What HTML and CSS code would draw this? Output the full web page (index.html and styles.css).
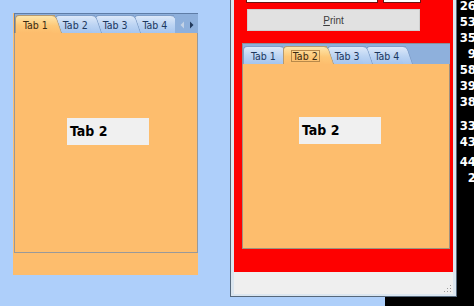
FILE: index.html
```html
<!DOCTYPE html>
<html lang="en">
<head>
    <meta charset="UTF-8">
    <meta name="viewport" content="width=device-width, initial-scale=1.0">
    <title>Tabs</title>
    <link rel="stylesheet" href="styles.css">
</head>
<body>
    <div class="screen">
        <!-- left: docked tab widget on the desktop -->
        <div class="desk">
            <div class="dock">
                <div class="tabs tabs-dock">
                    <div class="tabbar">
                        <div class="tabstrip">
                            <span class="tab current">Tab 1</span>
                            <span class="tab">Tab 2</span>
                            <span class="tab">Tab 3</span>
                            <span class="tab">Tab 4</span>
                        </div>
                        <div class="scroller">
                            <svg width="22" height="18" viewBox="0 0 22 18">
                                <path d="M9 6.5 L5.5 10 L9 13.5 Z" fill="#c3d2e6"/>
                                <path d="M15 6.5 L18.5 10 L15 13.5 Z" fill="#22395c"/>
                            </svg>
                        </div>
                    </div>
                    <div class="page page-dock">
                        <div class="caption">Tab 2</div>
                    </div>
                </div>
            </div>
        </div>

        <!-- middle: the window -->
        <div class="mid">
            <div class="window">
                <div class="client">
                    <div class="fields">
                        <div class="field field-wide"></div>
                        <div class="field field-short"></div>
                    </div>
                    <button class="print"><u>P</u>rint</button>
                    <div class="tabs tabs-win">
                        <div class="tabbar">
                            <div class="tabstrip">
                                <span class="tab">Tab 1</span>
                                <span class="tab current"><span class="focus">Tab 2</span></span>
                                <span class="tab">Tab 3</span>
                                <span class="tab">Tab 4</span>
                            </div>
                        </div>
                        <div class="page page-win">
                            <div class="caption">Tab 2</div>
                        </div>
                    </div>
                </div>
                <div class="statusbar">
                    <svg class="grip" width="10" height="10" viewBox="0 0 10 10">
                        <rect x="8" y="2" width="1" height="1" fill="#9a9a9a"/>
                        <rect x="5" y="5" width="1" height="1" fill="#9a9a9a"/>
                        <rect x="8" y="5" width="1" height="1" fill="#9a9a9a"/>
                        <rect x="2" y="8" width="1" height="1" fill="#9a9a9a"/>
                        <rect x="5" y="8" width="1" height="1" fill="#9a9a9a"/>
                        <rect x="8" y="8" width="1" height="1" fill="#9a9a9a"/>
                    </svg>
                </div>
            </div>
            <div class="strip">
                <div class="strip-blue"></div>
                <div class="strip-black"></div>
            </div>
        </div>

        <!-- right: black column of numbers -->
        <div class="side">
            <div class="nums">
                <div>26</div>
                <div>53</div>
                <div>35</div>
                <div>9</div>
                <div>58</div>
                <div>39</div>
                <div>38</div>
                <div class="gap-lg">33</div>
                <div>43</div>
                <div class="gap-sm">44</div>
                <div>2</div>
            </div>
        </div>
    </div>
</body>
</html>
```

FILE: styles.css
```css
html, body{
    margin: 0;
    padding: 0;
}
body{
    width: 474px;
    height: 306px;
    overflow: hidden;
    font-family: "DejaVu Sans", "Liberation Sans", sans-serif;
    font-stretch: condensed;
}
.screen{
    display: flex;
    height: 306px;
}
/*desktop*/
.desk{
    width: 230px;
    background: #aecffa;
}
.dock{
    width: 185px;
    margin: 13px 0 0 13px;
    padding-bottom: 22px;
    background: #fdbd6d;
}
.tabs-dock{
    width: 184px;
    margin-left: 1px;
}
/*tab widget*/
.tabbar{
    display: flex;
    background: #8eb0dc;
    border-top: 1px solid #5f7da6;
    border-left: 1px solid #5f7da6;
    padding-top: 1px;
}
.tabstrip{
    display: flex;
    flex: 1;
    overflow: hidden;
    align-items: flex-end;
}
.tabs-dock .tabstrip{
    flex: none;
    width: 160px;
}
.scroller{
    width: 22px;
    height: 18px;
}
.scroller svg{
    display: block;
}
.tab{
    position: relative;
    display: flex;
    align-items: center;
    flex: none;
    height: 17px;
    padding: 0 7px;
    font-size: 10.5px;
    color: #1c375e;
    background: linear-gradient(#dde9f9, #bcd4f3 50%, #a6c5ee);
    border-top: 1px solid #7f9ec8;
    border-left: 1px solid #7f9ec8;
    border-top-left-radius: 4px;
    white-space: nowrap;
}
.tab::after{
    content: '';
    position: absolute;
    z-index: -1;
    top: -1px;
    right: -1px;
    width: 9px;
    height: 18px;
    background: inherit;
    border-top: 1px solid #7f9ec8;
    border-right: 1px solid #7f9ec8;
    border-top-right-radius: 5px;
    transform: skewX(19deg);
    transform-origin: top left;
}
.tab:nth-child(1){ z-index: 4; }
.tab:nth-child(2){ z-index: 3; }
.tab:nth-child(3){ z-index: 2; }
.tab:nth-child(4){ z-index: 1; }
.tab.current{
    z-index: 9;
    color: #3b2a12;
    background: linear-gradient(#fee6ab, #fdc877 55%, #fdbd6d);
    border-color: #b59a70;
}
.tab.current::after{
    border-color: #b59a70;
}
.focus{
    padding: 0 1px;
    border: 1px solid #b8894a;
    line-height: 10px;
}
.page{
    background: #fdbd6d;
    border: 1px solid #a1927f;
    border-top: none;
    box-sizing: border-box;
}
.page-dock{
    height: 220px;
    padding: 85px 0 0 52px;
    border-color: #999;
}
.page-win{
    height: 185px;
    padding: 53px 0 0 56px;
}
.caption{
    width: 82px;
    height: 27px;
    box-sizing: border-box;
    padding-left: 3px;
    background: #f0f0f0;
    font-size: 14px;
    font-weight: bold;
    line-height: 27px;
    color: #000;
}
/*window*/
.mid{
    width: 227px;
    display: flex;
    flex-direction: column;
}
.window{
    height: 297px;
    box-sizing: border-box;
    padding: 0 3px 2px 3px;
    background: #dbe6f0;
    border: 1px solid #56687b;
    border-top: none;
}
.client{
    height: 272px;
    box-sizing: border-box;
    padding: 0 3px 0 8px;
    background: #fe0000;
    overflow: hidden;
}
.fields{
    display: flex;
    margin-left: 4px;
}
.field{
    height: 2px;
    background: #fff;
    border: 1px solid #6d1510;
    border-top: none;
}
.field-wide{
    width: 130px;
}
.field-short{
    width: 36px;
    margin-left: 5px;
}
.print{
    display: block;
    width: 173px;
    height: 22px;
    margin: 6px 0 0 5px;
    padding: 0;
    background: #e1e1e1;
    border: 1px solid #cfcfcf;
    font-family: "Liberation Sans", sans-serif;
    font-size: 10px;
    color: #3c3c3c;
}
.tabs-win{
    width: 208px;
    margin-top: 12px;
}
.tabs-win .tabbar{
    padding-top: 2px;
    border-color: #8a8f9a;
}
.statusbar{
    position: relative;
    height: 22px;
    background: #efefef;
}
.grip{
    position: absolute;
    right: 1px;
    bottom: 1px;
}
.strip{
    display: flex;
    flex: 1;
}
.strip-blue{
    width: 155px;
    background: #aecffa;
}
.strip-black{
    flex: 1;
    background: #000;
}
/*numbers*/
.side{
    width: 17px;
    background: #000;
    overflow: hidden;
}
.nums{
    width: 19px;
    margin-top: -2px;
    text-align: right;
    color: #fff;
    font-size: 13px;
    font-weight: bold;
    line-height: 16px;
}
.gap-lg{
    margin-top: 8px;
}
.gap-sm{
    margin-top: 4px;
}
```
